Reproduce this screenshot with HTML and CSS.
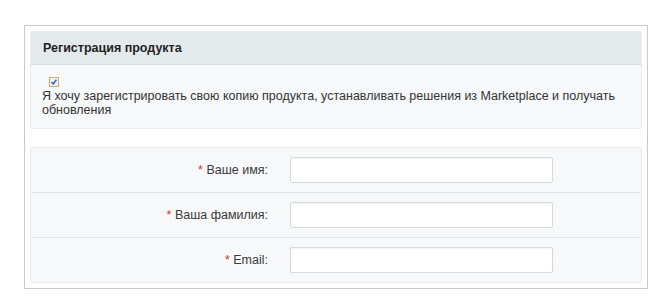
FILE: index.html
```html
<!DOCTYPE html>
<html lang="ru">
<head>
<meta charset="utf-8">
<title>Регистрация продукта</title>
<link rel="stylesheet" href="styles.css">
</head>
<body>
<div class="frame">
  <div class="panel">
    <div class="panel-head">Регистрация продукта</div>
    <div class="panel-body">
      <span class="check" role="checkbox" aria-checked="true">
        <svg width="6" height="6" viewBox="0 0 6 6"><path d="M0.6 3.2 L2.2 4.9 L5.4 0.7" fill="none" stroke="#2d5fb8" stroke-width="1.5"/></svg>
      </span>
      <div class="note">Я хочу зарегистрировать свою копию продукта, устанавливать решения из Marketplace и получать обновления</div>
    </div>
  </div>
  <div class="form">
    <div class="row">
      <label class="label"><span class="req">*</span> Ваше имя:</label>
      <input class="field" type="text">
    </div>
    <div class="row">
      <label class="label"><span class="req">*</span> Ваша фамилия:</label>
      <input class="field" type="text">
    </div>
    <div class="row">
      <label class="label"><span class="req">*</span> Email:</label>
      <input class="field" type="text">
    </div>
  </div>
</div>
</body>
</html>
```
FILE: styles.css
```css
html, body {
  margin: 0;
  padding: 0;
  background: #ffffff;
}
body {
  font-family: "Liberation Sans", Arial, sans-serif;
  font-size: 12.5px;
  color: #333333;
}
.frame {
  margin: 25px 0 0 24px;
  width: 612px;
  padding: 5px;
  border: 1px solid #c9c9c9;
}
.panel {
  background: #f7f8fa;
  border: 1px solid #e9ebed;
  border-top: none;
  border-radius: 3px;
}
.panel-head {
  height: 33px;
  line-height: 35px;
  padding-left: 12px;
  background: #e4e9eb;
  border-bottom: 1px solid #d3d9dc;
  font-weight: bold;
  color: #1f1f1f;
  border-radius: 3px 3px 0 0;
}
.panel-body {
  padding: 12px 11px 11px;
}
.check {
  display: flex;
  align-items: center;
  justify-content: center;
  width: 8px;
  height: 8px;
  border: 1px solid #d4ac72;
  background: #eef1f6;
  margin-left: 7px;
  margin-bottom: 2px;
}
.note {
  line-height: 14px;
  color: #333333;
}
.form {
  margin-top: 18px;
  background: #f7f8fa;
  border: 1px solid #e9ebed;
  border-radius: 3px;
}
.row {
  display: grid;
  grid-template-columns: 237px 263px;
  column-gap: 22px;
  align-items: center;
  height: 44px;
  border-bottom: 1px solid #e3e6e8;
}
.row:last-child {
  border-bottom: none;
}
.label {
  text-align: right;
  color: #3a3a3a;
}
.req {
  color: #d0342c;
}
.field {
  box-sizing: border-box;
  width: 263px;
  height: 26px;
  margin: 0;
  padding: 0 6px;
  background: #ffffff;
  border: 1px solid #d7d9db;
  border-radius: 2px;
  box-shadow: inset 0 1px 1px rgba(0,0,0,0.04);
  font-family: inherit;
  font-size: 12px;
}
```
